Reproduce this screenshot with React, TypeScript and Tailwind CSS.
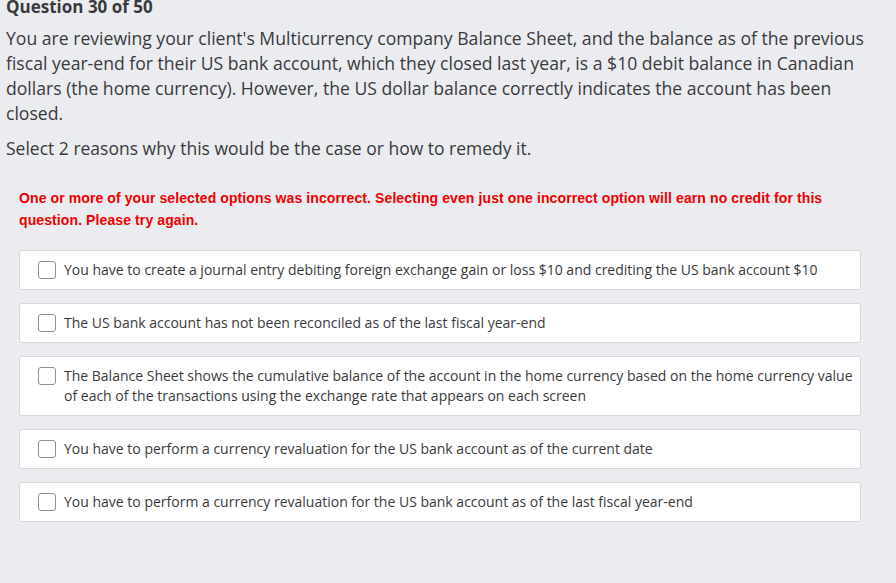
import { Check } from 'lucide-react'

const options = [
  'You have to create a journal entry debiting foreign exchange gain or loss $10 and crediting the US bank account $10',
  'The US bank account has not been reconciled as of the last fiscal year-end',
  'The Balance Sheet shows the cumulative balance of the account in the home currency based on the home currency value of each of the transactions using the exchange rate that appears on each screen',
  'You have to perform a currency revaluation for the US bank account as of the current date',
  'You have to perform a currency revaluation for the US bank account as of the last fiscal year-end',
]

function Option({ text }: { text: string }) {
  return (
    <label className="flex items-start gap-[8px] bg-white border border-[#d6d8dc] rounded-[3px] pl-[18px] pr-[4px] py-[9px]">
      <span className="mt-[1px] shrink-0 w-[18px] h-[18px] border border-[#8d9096] rounded-[3px] bg-white flex items-center justify-center">
        <Check className="hidden w-3 h-3" />
      </span>
      <span className="text-[14px] leading-[20px] text-[#393a3d]">{text}</span>
    </label>
  )
}

export default function App() {
  return (
    <div className="min-h-[583px] w-[896px] bg-[#ebecef] overflow-hidden" style={{ fontFamily: '"Open Sans", Lato, sans-serif' }}>
      <div className="pl-[6px] pr-[30px]">
        <h2 className="-mt-[4px] text-[17px] leading-[22px] font-bold text-[#393a3d]">Question 30 of 50</h2>
        <p className="mt-[8px] text-[17.6px] leading-[25px] text-[#393a3d]">
          You are reviewing your client's Multicurrency company Balance Sheet, and the balance as of the previous fiscal year-end for their US bank account, which they closed last year, is a $10 debit balance in Canadian dollars (the home currency). However, the US dollar balance correctly indicates the account has been closed.
        </p>
        <p className="mt-[10px] text-[17.5px] leading-[25px] text-[#393a3d]">Select 2 reasons why this would be the case or how to remedy it.</p>
      </div>
      <div className="pl-[19px] pr-[35px]">
        <p className="mt-[26px] text-[14px] tracking-[0.1px] leading-[22px] font-bold text-[#f00000]" style={{ fontFamily: '"Liberation Sans", Arial, sans-serif' }}>
          One or more of your selected options was incorrect. Selecting even just one incorrect option will earn no credit for this question. Please try again.
        </p>
        <div className="mt-[19px] flex flex-col gap-[13px]">
          {options.map((o) => (
            <Option key={o} text={o} />
          ))}
        </div>
      </div>
    </div>
  )
}
